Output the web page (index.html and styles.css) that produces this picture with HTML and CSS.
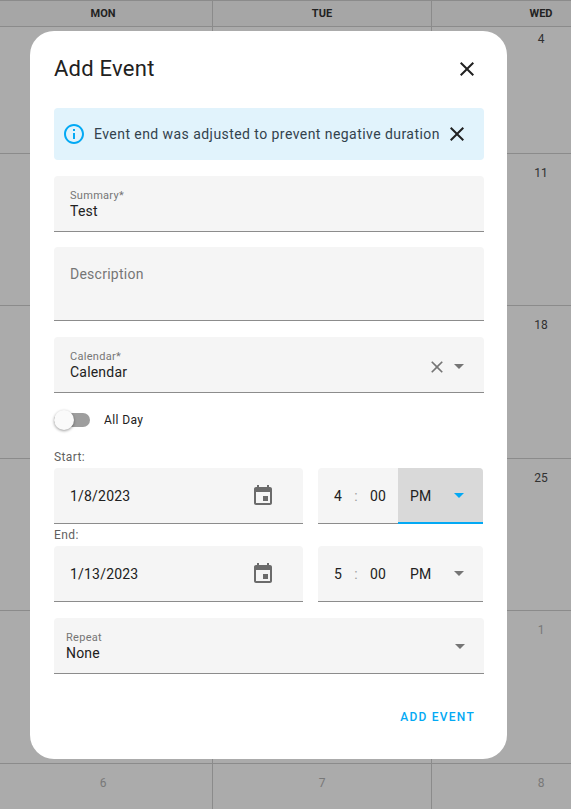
FILE: index.html
```html
<!DOCTYPE html>
<html lang="en">
<head>
<meta charset="utf-8">
<title>Add Event</title>
<link rel="stylesheet" href="styles.css">
</head>
<body>
<div class="calendar">
  <div class="head">MON</div><div class="head">TUE</div><div class="head">WED</div>
  <div class="cell first"></div><div class="cell first"></div><div class="cell first">4</div>
  <div class="cell"></div><div class="cell"></div><div class="cell">11</div>
  <div class="cell"></div><div class="cell"></div><div class="cell">18</div>
  <div class="cell"></div><div class="cell"></div><div class="cell">25</div>
  <div class="cell"></div><div class="cell"></div><div class="cell muted">1</div>
  <div class="cell muted">6</div><div class="cell muted">7</div><div class="cell muted">8</div>
</div>
<div class="backdrop"></div>
<main class="dialog">
  <header class="title-row">
    <h1>Add Event</h1>
    <svg class="icon close-main" viewBox="0 0 24 24"><path d="M19 6.41 17.59 5 12 10.59 6.41 5 5 6.41 10.59 12 5 17.59 6.41 19 12 13.41 17.59 19 19 17.59 13.41 12z"/></svg>
  </header>
  <div class="alert">
    <svg class="icon info" viewBox="0 0 24 24"><path d="M11 7h2v2h-2zm0 4h2v6h-2zm1-9C6.48 2 2 6.48 2 12s4.48 10 10 10 10-4.48 10-10S17.52 2 12 2zm0 18c-4.41 0-8-3.59-8-8s3.59-8 8-8 8 3.59 8 8-3.59 8-8 8z"/></svg>
    <span class="alert-text">Event end was adjusted to prevent negative duration</span>
    <svg class="icon close-alert" viewBox="0 0 24 24"><path d="M19 6.41 17.59 5 12 10.59 6.41 5 5 6.41 10.59 12 5 17.59 6.41 19 12 13.41 17.59 19 19 17.59 13.41 12z"/></svg>
  </div>
  <div class="field labelled">
    <span class="label">Summary*</span>
    <span class="value">Test</span>
  </div>
  <div class="field description">Description</div>
  <div class="field labelled with-actions">
    <div class="stack">
      <span class="label">Calendar*</span>
      <span class="value">Calendar</span>
    </div>
    <svg class="icon clear" viewBox="0 0 24 24"><path d="M19 6.41 17.59 5 12 10.59 6.41 5 5 6.41 10.59 12 5 17.59 6.41 19 12 13.41 17.59 19 19 17.59 13.41 12z"/></svg>
    <span class="caret"></span>
  </div>
  <div class="switch-row">
    <span class="switch"><span class="track"></span><span class="thumb"></span></span>
    <span class="switch-label">All Day</span>
  </div>
  <div class="when-label start-label">Start:</div>
  <div class="when-row">
    <div class="field date">
      <span class="value">1/8/2023</span>
      <svg class="icon cal" viewBox="0 0 24 24"><path d="M17 12h-5v5h5v-5zM16 1v2H8V1H6v2H5c-1.11 0-1.99.9-1.99 2L3 19c0 1.1.89 2 2 2h14c1.1 0 2-.9 2-2V5c0-1.1-.9-2-2-2h-1V1h-2zm3 18H5V8h14v11z"/></svg>
    </div>
    <div class="field time">
      <span class="num">4</span><span class="colon">:</span><span class="num mins">00</span>
      <div class="ampm active"><span class="value">PM</span><span class="caret blue"></span></div>
    </div>
  </div>
  <div class="when-label end-label">End:</div>
  <div class="when-row">
    <div class="field date">
      <span class="value">1/13/2023</span>
      <svg class="icon cal" viewBox="0 0 24 24"><path d="M17 12h-5v5h5v-5zM16 1v2H8V1H6v2H5c-1.11 0-1.99.9-1.99 2L3 19c0 1.1.89 2 2 2h14c1.1 0 2-.9 2-2V5c0-1.1-.9-2-2-2h-1V1h-2zm3 18H5V8h14v11z"/></svg>
    </div>
    <div class="field time">
      <span class="num">5</span><span class="colon">:</span><span class="num mins">00</span>
      <div class="ampm"><span class="value">PM</span><span class="caret"></span></div>
    </div>
  </div>
  <div class="field labelled with-actions repeat">
    <div class="stack">
      <span class="label">Repeat</span>
      <span class="value">None</span>
    </div>
    <span class="caret"></span>
  </div>
  <div class="actions"><span class="add">ADD EVENT</span></div>
</main>
</body>
</html>
```

FILE: styles.css
```css
* { box-sizing: border-box; }
html, body { margin: 0; height: 100%; overflow: hidden; }
body { font-family: Roboto, "Liberation Sans", sans-serif; background: #fff; color: #212121; position: relative; }

.calendar {
  display: grid;
  grid-template-columns: repeat(3, 219px);
  grid-template-rows: 27px 127px 152px 153px 152px 153px 153px;
  margin-left: -6px;
  width: 577px;
  height: 809px;
  overflow: hidden;
}
.head {
  background: #f8f8f8;
  border-right: 1px solid #d0d0d0;
  border-top: 1px solid #d0d0d0;
  border-bottom: 1px solid #d0d0d0;
  font-size: 11px;
  font-weight: 700;
  text-align: center;
  line-height: 25px;
  color: #333;
}
.cell {
  border-right: 1px solid #d0d0d0;
  border-bottom: 1px solid #d0d0d0;
  font-size: 12px;
  text-align: center;
  padding-top: 12px;
  line-height: 14px;
  color: #4a4a4a;
}
.cell.first { padding-top: 5px; }
.cell.muted { color: #b4b4b4; }
.backdrop { position: absolute; inset: 0; background: rgba(0,0,0,.33); }

.dialog {
  position: absolute;
  left: 30px; top: 31px;
  width: 477px; height: 728px;
  background: #fff;
  border-radius: 24px;
  padding: 0 23px 0 24px;
  display: flex;
  flex-direction: column;
}
.title-row { display: flex; align-items: center; justify-content: space-between; height: 77px; padding-bottom: 2px; flex: none; }
h1 { margin: 0; font-size: 22px; font-weight: 400; letter-spacing: .25px; color: #212121; }
.icon { display: block; flex: none; }
.close-main { width: 24px; height: 24px; margin-right: 5px; fill: #212121; }

.alert {
  height: 52px; flex: none;
  background: #e1f3fc;
  border-radius: 4px;
  display: flex; align-items: center;
  padding: 0 15px 0 8px;
}
.info { width: 24px; height: 24px; fill: #03a9f4; }
.alert-text { font-size: 14px; letter-spacing: .44px; color: #33424d; margin-left: 8px; white-space: nowrap; flex: 1; }
.close-alert { width: 24px; height: 24px; fill: #212121; }

.field {
  background: #f5f5f5;
  border-radius: 4px 4px 0 0;
  border-bottom: 1px solid #8c8c8c;
  flex: none;
}
.labelled { height: 56px; margin-top: 16px; padding: 13px 16px 0; display: flex; flex-direction: column; }
.label { font-size: 11px; line-height: 13px; letter-spacing: .3px; color: #757575; display: block; }
.value { font-size: 14px; line-height: 18px; letter-spacing: .2px; color: #212121; display: block; }
.date .value, .ampm .value { padding-top: 1px; }
.description { height: 74px; margin-top: 15px; padding: 18px 16px 0; font-size: 14px; line-height: 18px; letter-spacing: .25px; color: #757575; }

.with-actions { flex-direction: row; align-items: flex-start; }
.stack { flex: 1; }
.clear { width: 20px; height: 20px; fill: #757575; margin-top: 7px; margin-right: 7px; }
.caret { width: 0; height: 0; border-left: 5px solid transparent; border-right: 5px solid transparent; border-top: 5px solid #757575; flex: none; }
.with-actions .caret { margin-top: 14px; margin-right: 4px; }

.switch-row { display: flex; align-items: center; height: 54px; flex: none; }
.switch { position: relative; display: block; width: 36px; height: 20px; flex: none; }
.track { position: absolute; left: 0; top: 3px; width: 36px; height: 14px; border-radius: 7px; background: #9e9e9e; }
.thumb { position: absolute; left: 0; top: 0; width: 20px; height: 20px; border-radius: 50%; background: #fafafa; box-shadow: 0 1px 3px rgba(0,0,0,.4); }
.switch-label { font-size: 12px; letter-spacing: .4px; margin-left: 14px; padding-bottom: 1px; color: #212121; }

.when-label { font-size: 12px; line-height: 14px; letter-spacing: .4px; color: #5f5f5f; flex: none; }
.start-label { margin-top: 0; height: 21px; padding-top: 3px; }
.end-label { height: 22px; padding-top: 4px; }
.when-row { display: flex; justify-content: space-between; flex: none; width: 429px; }
.date { width: 249px; height: 56px; display: flex; align-items: center; justify-content: space-between; padding: 0 28px 0 16px; }
.time { width: 165px; height: 56px; display: flex; align-items: stretch; padding: 0; line-height: 56px; }
.num { font-size: 14px; flex: none; width: 16px; margin-left: 12px; text-align: center; color: #212121; letter-spacing: .25px; }
.mins { margin-left: 9px; width: 22px; }
.colon { font-size: 14px; flex: none; color: #9e9e9e; width: 4px; margin-left: 8px; text-align: center; }
.ampm { flex: none; margin-left: 9px; width: 85px; display: flex; align-items: center; padding: 0 19px 0 12px; justify-content: space-between; }
.ampm.active { background: #d9d9d9; border-bottom: 2px solid #03a9f4; margin-bottom: -1px; border-top-right-radius: 4px; }
.caret.blue { border-top-color: #03a9f4; }
.cal { width: 24px; height: 24px; fill: #6b6b6b; }

.repeat { padding-left: 12px; margin-top: 16px; }
.repeat .caret { margin-right: 3px; margin-top: 13px; }

.actions { flex: 1; display: flex; justify-content: flex-end; padding: 36px 9px 0 0; }
.add { font-size: 12px; font-weight: 500; letter-spacing: 1.25px; color: #03a9f4; line-height: 14px; }
```
